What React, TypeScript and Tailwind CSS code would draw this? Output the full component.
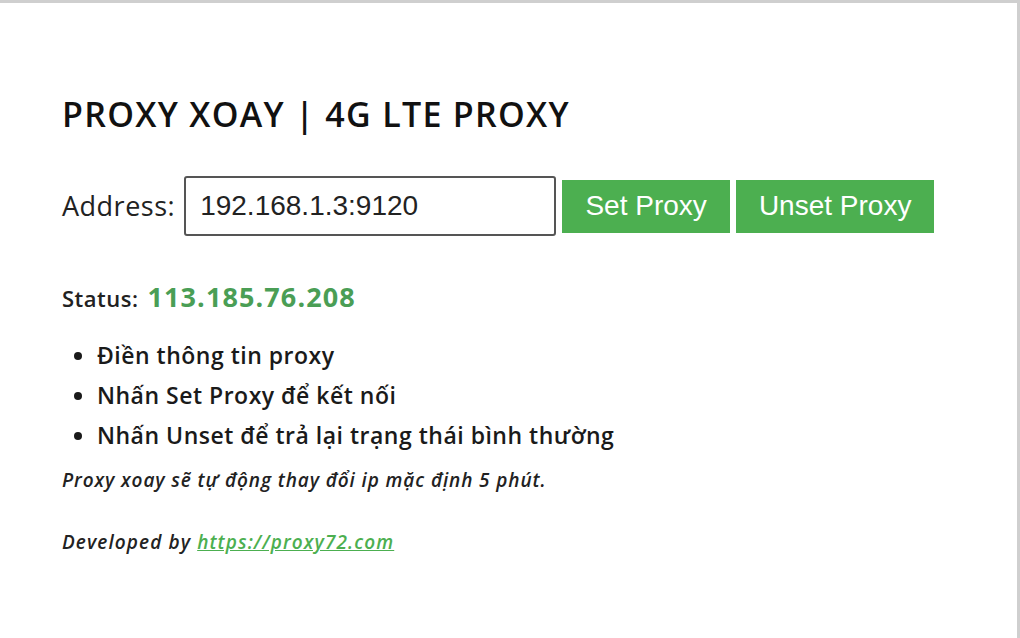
import React from "react";

const App: React.FC = () => {
  return (
    <div className="h-[638px] w-[1020px] bg-white border-t-[3px] border-r-[3px] border-[#cfcfcf] font-['Open_Sans',sans-serif] text-[#1a1a1a]">
      <div className="pl-[62px] pt-[91px]">
        {/* TITLE */}
        <h1 className="text-[34px] font-semibold leading-[40px] tracking-[1.3px] text-[#111]">
          PROXY XOAY | 4G LTE PROXY
        </h1>

        {/* ADDRESS ROW */}
        <div className="mt-[42px] flex items-center">
          <span className="text-[27px] tracking-[0.5px] text-[#222] mr-[9px]">Address:</span>
          <input
            defaultValue="192.168.1.3:9120"
            className="w-[372px] h-[60px] border-2 border-[#555] rounded-[3px] px-[14px] text-[28px] text-[#222] font-['Liberation_Sans',sans-serif] outline-none"
          />
          <button className="ml-[6px] w-[168px] h-[53px] bg-[#4caf50] text-white text-[28px] font-['Liberation_Sans',sans-serif]">
            Set Proxy
          </button>
          <button className="ml-[6px] w-[198px] h-[53px] bg-[#4caf50] text-white text-[28px] font-['Liberation_Sans',sans-serif]">
            Unset Proxy
          </button>
        </div>

        {/* STATUS */}
        <div className="mt-[41px] flex items-baseline gap-[9px]">
          <span className="text-[22px] font-semibold tracking-[0.5px] text-[#222]">Status:</span>
          <span className="text-[27px] font-bold tracking-[1.1px] text-[#4a9e55]">113.185.76.208</span>
        </div>

        {/* STEPS */}
        <ul className="mt-[17px] list-disc pl-[35px] text-[23px] font-semibold leading-[40px] tracking-[0.5px] text-[#1a1a1a]">
          <li>Điền thông tin proxy</li>
          <li>Nhấn Set Proxy để kết nối</li>
          <li>Nhấn Unset để trả lại trạng thái bình thường</li>
        </ul>

        <p className="mt-[11px] text-[19px] italic font-semibold tracking-[0.9px] text-[#222]">
          Proxy xoay sẽ tự động thay đổi ip mặc định 5 phút.
        </p>

        <p className="mt-[34px] text-[19px] italic font-semibold tracking-[1.1px] text-[#222]">
          Developed by{" "}
          <a href="#" className="text-[#4caf50] underline">
            https://proxy72.com
          </a>
        </p>
      </div>
    </div>
  );
};

export default App;
